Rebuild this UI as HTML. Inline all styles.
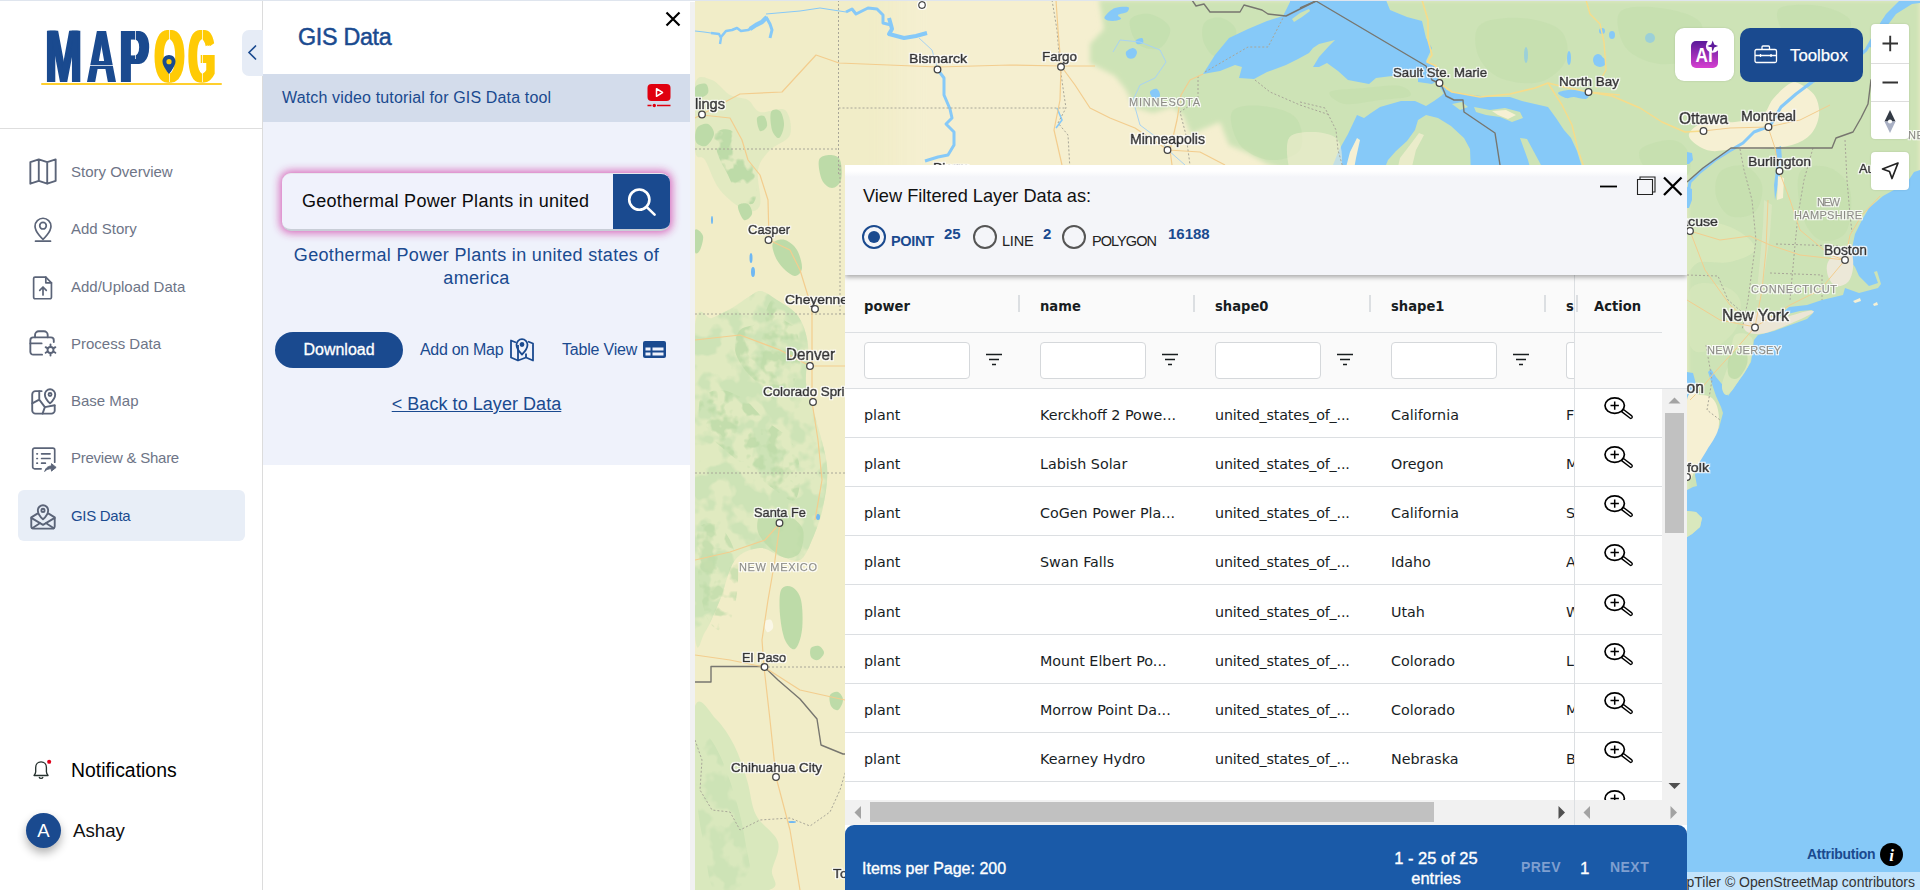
<!DOCTYPE html>
<html lang="en">
<head>
<meta charset="utf-8">
<title>MAPOG - GIS Data</title>
<style>
*{box-sizing:border-box;margin:0;padding:0}
html,body{width:1920px;height:890px;overflow:hidden;background:#fff;font-family:"Liberation Sans",sans-serif;color:#000}
.abs{position:absolute}
#topbar{position:absolute;left:0;top:0;width:1920px;height:1px;background:#dfe5ee;z-index:50}
/* ---------- sidebar ---------- */
#sidebar{position:absolute;left:0;top:0;width:263px;height:890px;background:#fff;border-right:1px solid #dcdcdc}
#logo{position:absolute;left:0;top:0;width:240px;height:100px}
#logo span{position:absolute;top:19.500px;font-size:74.500px;line-height:1;font-weight:bold;transform-origin:0 0;display:block}
#logo i{position:absolute;background:#fff;opacity:.75;display:block}
#logoline{position:absolute;left:40.500px;top:82.800px;width:181px;height:2.200px;background:#ffcf2e;border-radius:1px}
#sep{position:absolute;left:0;top:128px;width:262px;height:1px;background:#dedede}
#collapse{position:absolute;left:242px;top:30px;width:21px;height:46px;background:#e6ecf6;border-radius:7px 0 0 7px}
.mi{position:absolute;left:18px;width:227px;height:51px;border-radius:6px}
.mi.active{background:#e8eef7}
.mi svg{position:absolute;left:10px;top:11px;width:30px;height:30px}
.mi span{position:absolute;left:53px;top:17px;font-size:15px;line-height:18px;color:#6e7587;white-space:nowrap;letter-spacing:0px}
.mi.active span{color:#1a4a8f}
#notif{position:absolute;left:71px;top:759px;font-size:19.400px;line-height:22px;color:#000}
#avatar{position:absolute;left:26px;top:813px;width:35px;height:35px;border-radius:50%;background:#1a4a8f;color:#fff;font-size:18.500px;line-height:35px;text-align:center;box-shadow:0 5px 10px rgba(0,0,0,.3)}
#uname{position:absolute;left:73px;top:820px;font-size:18.700px;line-height:22px;color:#111}
/* ---------- panel ---------- */
#panel{position:absolute;left:263px;top:0;width:427px;height:890px;background:#fff}
#pscroll{position:absolute;left:690px;top:2px;width:5px;height:888px;background:#f1f1f1}
#ptitle{position:absolute;left:35px;top:24px;font-size:23.300px;line-height:26px;color:#1a4a8f;font-weight:normal;-webkit-text-stroke:.5px #1a4a8f;letter-spacing:-.3px}
#tut{position:absolute;left:0;top:74px;width:427px;height:48px;background:#d3dceb}
#tut span{position:absolute;left:19px;top:14px;font-size:16px;line-height:19px;color:#1a4a8f;letter-spacing:.15px;white-space:nowrap}
#pbody{position:absolute;left:0;top:122px;width:427px;height:343px;background:#eff2fb}
#search{position:absolute;left:19px;top:51px;width:388px;height:58px;border-radius:9px;background:#f0f2fc;box-shadow:0 0 9px 1.500px rgba(214,95,182,.95);overflow:hidden;border-bottom:2px solid #c9ced7;border-top:1px solid #e6e8ee}
#search .txt{position:absolute;left:20px;top:16.500px;font-size:18px;line-height:21px;color:#0b0b0b;white-space:nowrap;letter-spacing:.28px}
#search .btn{position:absolute;right:0;top:0;width:57px;height:55px;background:#1a4a8f}
#sub{position:absolute;left:0;top:122px;width:427px;text-align:center;font-size:18px;line-height:23px;color:#1a4a8f;letter-spacing:.33px}
#dl{position:absolute;left:12px;top:210px;width:128px;height:36px;border-radius:18px;background:#1a4a8f;color:#fff;font-size:16px;line-height:36px;text-align:center;-webkit-text-stroke:.3px #fff}
.plink{position:absolute;top:218px;font-size:16px;line-height:19px;color:#1a4a8f;white-space:nowrap}
#back{position:absolute;left:0;top:271px;width:427px;text-align:center;font-size:18px;line-height:22px;color:#1a4a8f;text-decoration:underline;letter-spacing:.05px}
/* ---------- map ---------- */
#map{position:absolute;left:695px;top:0;width:1225px;height:890px;background:#f1edc8;overflow:hidden}
#map svg.base{position:absolute;left:0;top:0}
.ctl{position:absolute;background:#fff;border-radius:4px;box-shadow:0 0 2px rgba(0,0,0,.15)}
/* ---------- dialog ---------- */
#dlg{position:absolute;left:845px;top:165px;width:842px;height:725px;background:#fff;overflow:hidden}
#dhead{position:absolute;left:0;top:0;width:842px;height:110px;background:#f4f5f9;box-shadow:0 2px 5px rgba(0,0,0,.35);z-index:3;border-top:10px solid #fff}
#dhead::before{content:"";position:absolute;left:0;top:-4px;width:100%;height:6px;background:linear-gradient(to bottom,#fff 0,#f4f5f9 100%)}
#dtitle{position:absolute;left:18px;top:10px;font-size:18.200px;line-height:22px;color:#111}
.rad{position:absolute;top:50px;width:24px;height:24px;border-radius:50%;border:2px solid #555}
.rad.on{border-color:#1a4a8f}
.rad.on::after{content:"";position:absolute;left:4px;top:4px;width:12px;height:12px;border-radius:50%;background:#1a4a8f}
.rlab{position:absolute;top:57px;font-size:14.500px;line-height:18px;color:#222;white-space:nowrap}
.rcnt{position:absolute;top:50px;font-size:15px;line-height:18px;color:#1a4a8f;font-weight:bold;white-space:nowrap}
#grid{position:absolute;left:0;top:110px;width:842px;height:550px;background:#fff;font-family:"DejaVu Sans","Liberation Sans",sans-serif}
#ghead{position:absolute;left:0;top:0;width:817px;height:114px;background:#fafafa}
.hl{position:absolute;left:0;height:1px;background:#dcdfe2}
.hc{position:absolute;top:22px;font-family:"DejaVu Sans Condensed","DejaVu Sans",sans-serif;font-size:14.600px;line-height:18px;font-weight:bold;color:#181d1f;white-space:nowrap}
.hsep{position:absolute;top:20px;width:2px;height:17px;background:#dcdfe2}
.fin{position:absolute;top:67px;width:106px;height:37px;border:1px solid #d5d8db;border-radius:4px;background:#fff}
.fic{position:absolute;top:78px;width:18px;height:14px}
.row{position:absolute;left:0;width:817px;height:49px;border-bottom:1px solid #dcdfe2}
.row span{position:absolute;top:17px;font-size:14.300px;line-height:18px;color:#181d1f;white-space:nowrap}
.row svg{position:absolute;left:757px;top:5px;width:32px;height:30px}
#pin{position:absolute;left:729px;top:0;width:1px;height:550px;background:#dcdfe2}
#foot{position:absolute;left:0;top:660px;width:842px;height:65px;background:#1a5aa8;border-radius:9px 9px 0 0;color:#fff}
</style>
</head>
<body>
<div id="topbar"></div>

<div id="sidebar">
  <div id="logo">
<span style="left:44.37px;transform:scaleX(0.588);color:#1a4a8f;text-shadow:4.56px 0 0 #1a4a8f,2.28px 0 0 #1a4a8f">M</span>
<span style="left:86.21px;transform:scaleX(0.53);color:#1a4a8f;text-shadow:4.72px 0 0 #1a4a8f,2.36px 0 0 #1a4a8f">A</span>
<span style="left:118.40px;transform:scaleX(0.582);color:#1a4a8f;text-shadow:6.62px 0 0 #1a4a8f,3.31px 0 0 #1a4a8f">P</span>
<span style="left:153.30px;transform:scaleX(0.505);color:#ffcb05;text-shadow:7.62px 0 0 #ffcb05,3.81px 0 0 #ffcb05">O</span>
<span style="left:187.28px;transform:scaleX(0.443);color:#ffcb05;text-shadow:9.26px 0 0 #ffcb05,4.63px 0 0 #ffcb05">G</span>
<i style="left:90px;top:65px;width:24px;height:1.200px"></i><i style="left:135px;top:30px;width:1px;height:29px"></i><i style="left:168.500px;top:30px;width:1px;height:52px"></i><i style="left:201.500px;top:30px;width:1px;height:52px"></i>
<svg style="position:absolute;left:161px;top:54px" width="16" height="21" viewBox="0 0 16 21"><path d="M8 1c-3.700 0-6.500 2.800-6.500 6.400c0 4.800 6.500 12.600 6.500 12.600s6.500-7.800 6.500-12.600c0-3.600-2.800-6.400-6.500-6.400z" fill="#1a4a8f"/><circle cx="8" cy="7.700" r="2.600" fill="#ffcb05"/></svg>
</div>
  <div id="logoline"></div>
  <div id="collapse"><svg width="21" height="46" viewBox="0 0 21 46"><path d="M14 15.500L7 22.500l7 7" fill="none" stroke="#1a4a8f" stroke-width="1.600"/></svg></div>
  <div id="sep"></div>

  <div class="mi" style="top:146px"><svg viewBox="0 0 32 32" fill="none" stroke="#5b6478" stroke-width="2" stroke-linejoin="round" stroke-linecap="round"><path d="M2.500 5.500l9-3 9 3 9-3v23l-9 3-9-3-9 3zM11.500 2.500v23M20.500 5.500v23"/></svg><span>Story Overview</span></div>
  <div class="mi" style="top:203px"><svg viewBox="0 0 32 32" fill="none" stroke="#5b6478" stroke-width="1.800" stroke-linecap="round"><path d="M16 27s-8.500-7.500-8.500-14a8.500 8.500 0 0 1 17 0c0 6.500-8.500 14-8.500 14z"/><circle cx="16" cy="12.500" r="3.500"/><path d="M8 29h16"/></svg><span>Add Story</span></div>
  <div class="mi" style="top:261px"><svg viewBox="0 0 32 32" fill="none" stroke="#5b6478" stroke-width="1.800" stroke-linejoin="round" stroke-linecap="round"><path d="M7.500 5.500h11.500l6 6v15.500a1.500 1.500 0 0 1-1.500 1.500h-16a1.500 1.500 0 0 1-1.500-1.500v-20a1.500 1.500 0 0 1 1.500-1.500z"/><path d="M19 5.500v6h6"/><path d="M16 24.500v-8M12.500 19.500l3.500-3.500 3.500 3.500"/></svg><span>Add/Upload Data</span></div>
  <div class="mi" style="top:318px"><svg style="top:9px" viewBox="0 0 32 32" fill="none" stroke="#5b6478" stroke-width="2" stroke-linejoin="round" stroke-linecap="round"><path d="M15 29.500h-9.500a3 3 0 0 1-3-3v-12.500a3 3 0 0 1 3-3h19a3 3 0 0 1 3 3v2"/><path d="M7.500 11v-2.500a4 4 0 0 1 4-4h5.500a4 4 0 0 1 4 4v2.500"/><path d="M2.500 17.500h12"/><circle cx="24" cy="24.500" r="3.200"/><path d="M24 18.500v2.500M24 28v2.500M18.800 21.500l2.200 1.300M27 26.200l2.200 1.300M18.800 27.500l2.200-1.300M27 22.800l2.200-1.300"/></svg><span>Process Data</span></div>
  <div class="mi" style="top:375px"><svg viewBox="0 0 32 32" fill="none" stroke="#5b6478" stroke-width="2" stroke-linejoin="round" stroke-linecap="round"><path d="M14.500 5.500h-6.500a3.500 3.500 0 0 0-3.500 3.500v17a3.500 3.500 0 0 0 3.500 3.500h17a3.500 3.500 0 0 0 3.500-3.500v-5"/><path d="M12 5.500v9l-7.500 4M12 14.500l6 8-2.500 7M18 22.500l10.500-2"/><path d="M23.500 18.500s-5.500-5-5.500-9.500a5.500 5.500 0 0 1 11 0c0 4.500-5.500 9.500-5.500 9.500z"/><circle cx="23.500" cy="9" r="1.600"/></svg><span>Base Map</span></div>
  <div class="mi" style="top:432px"><svg viewBox="0 0 32 32" fill="none" stroke="#5b6478" stroke-width="1.800" stroke-linejoin="round" stroke-linecap="round"><path d="M14 27.500h-7a2 2 0 0 1-2-2v-18a2 2 0 0 1 2-2h19.500a2 2 0 0 1 2 2v13"/><path d="M14.500 11.500h9M14.500 16.500h9M14.500 21.500h4M9.500 11.500h.5M9.500 16.500h.5M9.500 21.500h.5"/><path d="M18 30c1-4 4-5.500 7-5.500v-2.500l5 4-5 4v-2.500c-3 0-5 .5-7 2.500z" fill="#5b6478" stroke-width="1"/></svg><span style="letter-spacing:-.25px">Preview &amp; Share</span></div>
  <div class="mi active" style="top:490px"><svg viewBox="0 0 32 32" fill="none" stroke="#5b6478" stroke-width="2" stroke-linejoin="round" stroke-linecap="round"><path d="M10 13.500l-6.500 4v9.500a2.500 2.500 0 0 0 2.500 2.500h20a2.500 2.500 0 0 0 2.500-2.500v-9.500l-6.500-4"/><path d="M3.500 18l12.500 7.500 12.500-7.500M4.500 29l8.500-5.500M27.500 29l-8.500-5.500"/><path d="M16 19.500s-5.500-5-5.500-9.500a5.500 5.500 0 0 1 11 0c0 4.500-5.500 9.500-5.500 9.500z"/><circle cx="16" cy="10" r="1.700"/></svg><span style="letter-spacing:-.3px">GIS Data</span></div>

  <svg class="abs" style="left:29px;top:756px" width="25" height="28.600" viewBox="0 0 28 32"><path d="M13.500 6.500c-3.600 0-6 2.700-6 6.300v4.700c0 1.500-.7 2.800-1.800 4.300h15.600c-1.100-1.500-1.800-2.800-1.800-4.300v-4.700c0-3.600-2.400-6.300-6-6.300z" fill="none" stroke="#26322f" stroke-width="1.500" stroke-linejoin="round"/><path d="M11.300 23.500a2.300 2.300 0 0 0 4.400 0" fill="none" stroke="#26322f" stroke-width="1.400"/><circle cx="22.600" cy="6.500" r="2.300" fill="#e0001b"/></svg>
  <div id="notif">Notifications</div>
  <div id="avatar">A</div>
  <div id="uname">Ashay</div>
</div>

<div id="panel">
  <div id="ptitle">GIS Data</div>
  <svg class="abs" style="left:401px;top:10px" width="18" height="18" viewBox="0 0 18 18"><path d="M2.500 2.500l13 13M15.500 2.500l-13 13" stroke="#000" stroke-width="2.200" fill="none"/></svg>
  <div id="tut"><span>Watch video tutorial for GIS Data tool</span>
    <svg class="abs" style="left:383px;top:9px" width="26" height="28" viewBox="0 0 26 28"><rect x="1.500" y="1" width="23" height="17" rx="4" fill="#e0000f"/><path d="M10.500 5.700l6 3.800-6 3.800z" fill="none" stroke="#fff" stroke-width="1.500" stroke-linejoin="round"/><path d="M1.500 22.500h4M11 22.500h13.500" stroke="#e0000f" stroke-width="1.600"/><circle cx="8.300" cy="22.500" r="1.700" fill="#e0000f"/></svg>
  </div>
  <div id="pbody">
    <div id="search"><span class="txt">Geothermal Power Plants in united</span>
      <div class="btn"><svg width="57" height="55" viewBox="0 0 57 55"><circle cx="26.300" cy="25.600" r="10.100" fill="none" stroke="#fff" stroke-width="2.600"/><path d="M33.800 33.100l7.800 7.500" stroke="#fff" stroke-width="2.600" stroke-linecap="round"/></svg></div>
    </div>
    <div id="sub">Geothermal Power Plants in united states of<br>america</div>
    <div id="dl">Download</div>
    <div class="plink" style="left:157px;letter-spacing:-.3px">Add on Map</div>
    <svg class="abs" style="left:245px;top:213px" width="28" height="28" viewBox="0 0 28 28" fill="none" stroke="#1a4a8f" stroke-width="1.800" stroke-linejoin="round"><path d="M8 7.500l-5 -2v17l7 3 8-3 7 3v-17l-5-2"/><path d="M10 10v15.500M18 22.500v-4"/><path d="M14 19.500s-5.500-5.500-5.500-9.800a5.500 5.500 0 0 1 11 0c0 4.300-5.500 9.800-5.500 9.800z"/><circle cx="14" cy="9.500" r="1.500" fill="#1a4a8f"/></svg>
    <div class="plink" style="left:299px;letter-spacing:-.2px">Table View</div>
    <svg class="abs" style="left:380px;top:219px" width="23" height="18" viewBox="0 0 23 18"><rect x="0" y="0" width="23" height="17" rx="2" fill="#1a4a8f"/><path d="M2.500 6.500h5v3h-5zM9.500 6.500h11v3h-11zM2.500 11.500h5v3h-5zM9.500 11.500h11v3h-11z" fill="#eff2fb"/></svg>
    <div id="back">&lt; Back to Layer Data</div>
  </div>
</div>
<div id="pscroll"></div>

<div id="map">
<svg class="base" width="1225" height="890" viewBox="695 0 1225 890">
<rect x="695" y="0" width="1225" height="890" fill="#f1edc8"/>
<filter id="mot" x="0" y="0" width="100%" height="100%"><feTurbulence type="fractalNoise" baseFrequency="0.045" numOctaves="3" seed="7" result="n"/><feColorMatrix in="n" type="matrix" values="0 0 0 0 0 0 0 0 0 0 0 0 0 0 0 0 0 0 7 -3.100" result="m"/><feComposite in="SourceGraphic" in2="m" operator="in"/></filter>
<filter id="mot2" x="0" y="0" width="100%" height="100%"><feTurbulence type="fractalNoise" baseFrequency="0.06" numOctaves="3" seed="23" result="n"/><feColorMatrix in="n" type="matrix" values="0 0 0 0 0 0 0 0 0 0 0 0 0 0 0 0 0 0 7 -3.400" result="m"/><feComposite in="SourceGraphic" in2="m" operator="in"/></filter>
<filter id="soft2" x="-10%" y="-30%" width="120%" height="160%"><feGaussianBlur stdDeviation="14"/></filter>
<path d="M900 -30 L1320 -30 L1320 200 L900 200Z" fill="#f6f0d3" opacity=".8" filter="url(#soft2)"/>
<filter id="soft" x="-5%" y="-5%" width="110%" height="110%"><feGaussianBlur stdDeviation="2.500"/></filter>
<path d="M1099 0 L1104 29 L1090 44 L1090 63 L1115 76 L1126 90 L1134 107 L1153 113 L1172 107 L1183 115 L1191 134 L1220 122 L1229 145 L1248 153 L1267 164 L1300 175 L1687 175 L1687 560 L1920 560 L1920 0Z" fill="#cde3b6" filter="url(#soft)"/>
<path d="M1205 22C1208.2 18.3 1216.8 16.7 1222 18C1227.2 19.3 1234.7 24.7 1236 30C1237.3 35.3 1233.7 45.7 1230 50C1226.3 54.3 1218.5 57.7 1214 56C1209.5 54.3 1204.5 45.7 1203 40C1201.5 34.3 1201.8 25.7 1205 22Z" fill="#bddba8" opacity=".45"/>
<path d="M1232 112C1235.7 105.5 1251.3 105.0 1262 106C1272.7 107.0 1289.7 110.7 1296 118C1302.3 125.3 1304.3 143.0 1300 150C1295.7 157.0 1280.0 160.8 1270 160C1260.0 159.2 1246.3 153.0 1240 145C1233.7 137.0 1228.3 118.5 1232 112Z" fill="#bddba8" opacity=".45"/>
<path d="M1130 20C1132.0 15.0 1143.3 12.7 1150 14C1156.7 15.3 1168.3 22.3 1170 28C1171.7 33.7 1165.3 45.3 1160 48C1154.7 50.7 1143.0 48.7 1138 44C1133.0 39.3 1128.0 25.0 1130 20Z" fill="#bddba8" opacity=".45"/>
<path d="M1203 74 L1215 55 L1229 38 L1248 29 L1267 21 L1283 16 L1290 2 L1290 0 L1386 0 L1390 10 L1407 17 L1422 21 L1426 38 L1432 48 L1426 61 L1434 65 L1439 80 L1432 84 L1418 82 L1418 76 L1407 74 L1392 76 L1376 78 L1369 84 L1348 80 L1338 71 L1327 63 L1319 67 L1313 67 L1319 57 L1329 46 L1335 40 L1319 44 L1313 48 L1309 53 L1298 59 L1286 65 L1267 72 L1254 79 L1239 78 L1242 67 L1235 65 L1220 71Z" fill="#86c9f8" />
<path d="M1292 19 L1300 13 L1309 9 L1310 11 L1302 17 L1294 22Z" fill="#cde3b6" />
<path d="M1329 175 L1339 150 L1348 134 L1357 115 L1364 118 L1371 113 L1380 107 L1401 101 L1415 101 L1426 106 L1434 101 L1441 96 L1447 90 L1451 92 L1472 95 L1491 97 L1510 97 L1522 101 L1548 107 L1556 118 L1564 130 L1571 138 L1577 151 L1581 164 L1584 175Z" fill="#86c9f8" />
<path d="M1439 82 L1444 90 L1449 97 L1458 101" fill="none" stroke="#86c9f8" stroke-width="4" stroke-linejoin="round" />
<path d="M1382 175 L1388 160 L1396 151 L1407 141 L1415 130 L1418 120 L1426 115 L1438 118 L1451 126 L1464 138 L1470 149 L1471 175Z" fill="#cde3b6" />
<path d="M1396 175 L1400 158 L1410 145 L1419 133 L1424 135 L1416 150 L1410 175Z" fill="#f6f0d3" opacity=".7"/>
<path d="M1452 104 L1462 102 L1468 107 L1460 110Z" fill="#cde3b6" />
<path d="M1474 107 L1490 110 L1505 108 L1520 112 L1523 118 L1512 122 L1500 117 L1486 115 L1476 112Z" fill="#cde3b6" />
<path d="M1492 111 L1506 110 L1516 115 L1508 119 L1498 115Z" fill="#f6f0d3" />
<path d="M1520 138 L1527 139 L1534 152 L1541 165 L1545 175 L1532 175 L1528 160Z" fill="#cde3b6" />
<path d="M1344 175 L1350 152 L1357 138 L1360 140 L1356 158 L1353 175Z" fill="#f6f0d3" />
<path d="M1106 15C1107.7 13.2 1111.3 9.3 1115 8C1118.7 6.7 1126.0 6.3 1128 7C1130.0 7.7 1128.7 10.7 1127 12C1125.3 13.3 1119.0 13.8 1118 15C1117.0 16.2 1122.0 18.0 1121 19C1120.0 20.0 1114.7 21.0 1112 21C1109.3 21.0 1106.0 20.0 1105 19C1104.0 18.0 1104.3 16.8 1106 15Z" fill="#86c9f8" />
<path d="M1126 52C1126.8 50.3 1131.2 48.0 1133 48C1134.8 48.0 1136.8 50.3 1137 52C1137.2 53.7 1135.5 57.0 1134 58C1132.5 59.0 1129.3 59.0 1128 58C1126.7 57.0 1125.2 53.7 1126 52Z" fill="#86c9f8" />
<path d="M1136 40C1136.8 39.0 1140.8 37.5 1142 38C1143.2 38.5 1143.8 42.0 1143 43C1142.2 44.0 1138.2 44.5 1137 44C1135.8 43.5 1135.2 41.0 1136 40Z" fill="#86c9f8" />
<path d="M1150 92C1150.5 90.3 1155.3 88.3 1157 89C1158.7 89.7 1160.5 94.3 1160 96C1159.5 97.7 1155.7 99.7 1154 99C1152.3 98.3 1149.5 93.7 1150 92Z" fill="#86c9f8" />
<path d="M1558 93C1558.3 91.7 1564.3 90.5 1568 90C1571.7 89.5 1576.5 89.5 1580 90C1583.5 90.5 1588.0 91.5 1589 93C1590.0 94.5 1588.5 98.3 1586 99C1583.5 99.7 1577.3 97.2 1574 97C1570.7 96.8 1568.7 98.7 1566 98C1563.3 97.3 1557.7 94.3 1558 93Z" fill="#86c9f8" />
<ellipse cx="1526" cy="55" rx="2" ry="8" fill="#86c9f8"/>
<ellipse cx="1569" cy="58" rx="2" ry="7" fill="#86c9f8"/>
<ellipse cx="1598" cy="60" rx="5" ry="6" fill="#86c9f8"/>
<ellipse cx="1602" cy="31" rx="3" ry="3" fill="#86c9f8"/>
<ellipse cx="1600" cy="62" rx="6" ry="5" fill="#86c9f8"/>
<ellipse cx="1650" cy="38" rx="5" ry="5" fill="#86c9f8"/>
<ellipse cx="1612" cy="35" rx="3" ry="4" fill="#86c9f8"/>
<path d="M1480 25C1487.0 18.8 1506.7 17.2 1520 18C1533.3 18.8 1552.3 23.0 1560 30C1567.7 37.0 1569.3 51.3 1566 60C1562.7 68.7 1551.0 79.0 1540 82C1529.0 85.0 1510.3 82.5 1500 78C1489.7 73.5 1481.3 63.8 1478 55C1474.7 46.2 1473.0 31.2 1480 25Z" fill="#bddba8" opacity=".4"/>
<path d="M1620 12C1625.7 5.3 1646.7 6.3 1660 8C1673.3 9.7 1694.0 14.2 1700 22C1706.0 29.8 1702.7 48.0 1696 55C1689.3 62.0 1671.7 65.2 1660 64C1648.3 62.8 1632.7 56.7 1626 48C1619.3 39.3 1614.3 18.7 1620 12Z" fill="#bddba8" opacity=".4"/>
<path d="M1780 8C1786.3 4.0 1808.3 4.0 1820 6C1831.7 8.0 1846.7 14.3 1850 20C1853.3 25.7 1848.3 36.0 1840 40C1831.7 44.0 1809.7 45.7 1800 44C1790.3 42.3 1785.3 36.0 1782 30C1778.7 24.0 1773.7 12.0 1780 8Z" fill="#bddba8" opacity=".4"/>
<path d="M1720 172C1724.8 167.0 1738.0 163.8 1745 166C1752.0 168.2 1760.3 177.3 1762 185C1763.7 192.7 1760.3 206.8 1755 212C1749.7 217.2 1736.5 218.7 1730 216C1723.5 213.3 1717.7 203.3 1716 196C1714.3 188.7 1715.2 177.0 1720 172Z" fill="#bddba8" opacity=".4"/>
<path d="M1800 172C1804.7 164.2 1821.7 165.0 1830 168C1838.3 171.0 1847.3 179.3 1850 190C1852.7 200.7 1851.0 223.7 1846 232C1841.0 240.3 1827.3 242.8 1820 240C1812.7 237.2 1805.3 226.3 1802 215C1798.7 203.7 1795.3 179.8 1800 172Z" fill="#bddba8" opacity=".4"/>
<path d="M1330 92C1333.3 89.3 1353.3 89.0 1365 88C1376.7 87.0 1392.5 84.7 1400 86C1407.5 87.3 1413.3 93.7 1410 96C1406.7 98.3 1390.8 98.7 1380 100C1369.2 101.3 1353.3 105.3 1345 104C1336.7 102.7 1326.7 94.7 1330 92Z" fill="#bddba8" opacity=".4"/>
<path d="M1640 150C1643.3 144.7 1662.2 140.0 1670 140C1677.8 140.0 1684.2 144.2 1687 150C1689.8 155.8 1693.2 171.3 1687 175C1680.8 178.7 1657.8 176.2 1650 172C1642.2 167.8 1636.7 155.3 1640 150Z" fill="#bddba8" opacity=".4"/>
<path d="M1288 140C1290.5 132.3 1302.0 132.3 1310 132C1318.0 131.7 1330.7 133.3 1336 138C1341.3 142.7 1342.2 153.3 1342 160C1341.8 166.7 1342.8 175.0 1335 178C1327.2 181.0 1302.8 184.3 1295 178C1287.2 171.7 1285.5 147.7 1288 140Z" fill="#f6f0d3" opacity=".55"/>
<path d="M1916 0 L1896 8 L1884 20 L1874 36 L1866 50 L1850 64 L1812 82 L1796 94 L1781 107 L1770 126 L1754 132 L1743 143 L1731 150 L1715 160 L1700 172 L1690 182 L1687 200" fill="none" stroke="#86c9f8" stroke-width="3" stroke-linejoin="round" />
<path d="M1920 0 L1900 0 L1886 14 L1876 30 L1868 46 L1872 48 L1884 30 L1896 14 L1912 4 L1920 3Z" fill="#86c9f8" />
<path d="M1689 134C1690.3 130.2 1697.3 124.0 1705 122C1712.7 120.0 1725.5 123.2 1735 122C1744.5 120.8 1755.7 118.8 1762 115C1768.3 111.2 1768.5 104.2 1773 99C1777.5 93.8 1784.5 86.5 1789 84C1793.5 81.5 1795.7 82.0 1800 84C1804.3 86.0 1811.8 90.8 1815 96C1818.2 101.2 1819.7 108.7 1819 115C1818.3 121.3 1815.5 129.0 1811 134C1806.5 139.0 1800.2 142.5 1792 145C1783.8 147.5 1771.5 148.3 1762 149C1752.5 149.7 1743.3 148.7 1735 149C1726.7 149.3 1718.3 151.7 1712 151C1705.7 150.3 1700.8 147.8 1697 145C1693.2 142.2 1687.7 137.8 1689 134Z" fill="#f6f0d3" />
<path d="M1812 82 L1796 94 L1781 107 L1770 126 L1754 132 L1743 143 L1731 150" fill="none" stroke="#86c9f8" stroke-width="3" stroke-linejoin="round" />
<path d="M1776 148 L1781 146 L1782 160 L1780 175 L1777 190 L1775 200 L1774 185 L1776 170Z" fill="#86c9f8" />
<path d="M1778 176 L1784 178 L1783 198 L1777 200Z" fill="#f6f0d3" />
<path d="M1687 152 L1692 153 L1693 160 L1689 164 L1687 164Z" fill="#86c9f8" />
<path d="M1687 187 L1692 189 L1692 200 L1689 208 L1687 208Z" fill="#86c9f8" />
<path d="M1920 170 L1914 172 L1906 184 L1892 191 L1883 196 L1869 208 L1862 220 L1855 234 L1852 248 L1848 258 L1855 267 L1859 276 L1869 286 L1878 283 L1874 272 L1877 271 L1881 284 L1878 288 L1859 293 L1845 288 L1843 295 L1822 300 L1807 305 L1789 307 L1779 316 L1800 311 L1812 310 L1813 313 L1807 319 L1774 331 L1758 335 L1754 340 L1751 362 L1742 376 L1728 396 L1726 389 L1716 377 L1711 369 L1708 372 L1712 384 L1716 396 L1721 407 L1723 413 L1719 428 L1711 438 L1703 451 L1698 462 L1695 475 L1697 486 L1693 487 L1687 490 L1687 511 L1696 512 L1702 518 L1700 527 L1692 534 L1687 537 L1687 890 L1920 890Z" fill="#86c9f8" />
<path d="M1687 372 L1693 373 L1696 384 L1693 397 L1695 407 L1690 412 L1687 412Z" fill="#86c9f8" />
<path d="M1687 445 L1690 452 L1689 470 L1687 476Z" fill="#86c9f8" />
<path d="M1853 301 L1860 298 L1861 301 L1855 303Z" fill="#f6f0d3" />
<path d="M1873 304 L1877 302 L1878 305 L1874 306Z" fill="#f6f0d3" />
<path d="M1700 395C1704.2 394.7 1709.0 395.5 1712 398C1715.0 400.5 1717.0 404.7 1718 410C1719.0 415.3 1719.8 423.3 1718 430C1716.2 436.7 1710.7 443.7 1707 450C1703.3 456.3 1698.8 463.0 1696 468C1693.2 473.0 1691.5 479.7 1690 480C1688.5 480.3 1687.5 483.3 1687 470C1686.5 456.7 1684.8 412.5 1687 400C1689.2 387.5 1695.8 395.3 1700 395Z" fill="#f6f0d3" />
<path d="M1687 511 L1696 512 L1702 518 L1700 527 L1692 534 L1687 537Z" fill="#d9e8bd" />
<path d="M1735 335C1738.7 331.3 1749.5 333.5 1752 338C1754.5 342.5 1752.3 354.7 1750 362C1747.7 369.3 1741.8 376.5 1738 382C1734.2 387.5 1729.7 394.5 1727 395C1724.3 395.5 1721.5 390.8 1722 385C1722.5 379.2 1727.8 368.3 1730 360C1732.2 351.7 1731.3 338.7 1735 335Z" fill="#d9e8bd" />
<path d="M1732 352C1734.8 350.0 1742.5 348.0 1745 350C1747.5 352.0 1748.2 359.3 1747 364C1745.8 368.7 1741.0 376.0 1738 378C1735.0 380.0 1730.7 378.7 1729 376C1727.3 373.3 1727.5 366.0 1728 362C1728.5 358.0 1729.2 354.0 1732 352Z" fill="#bddba8" opacity=".8"/>
<path d="M1745 318C1747.5 315.0 1754.5 312.0 1760 312C1765.5 312.0 1770.0 318.2 1778 318C1786.0 317.8 1802.5 311.7 1808 311C1813.5 310.3 1816.5 310.8 1811 314C1805.5 317.2 1784.0 326.7 1775 330C1766.0 333.3 1762.0 334.0 1757 334C1752.0 334.0 1747.0 332.7 1745 330C1743.0 327.3 1742.5 321.0 1745 318Z" fill="#ece6d6" />
<path d="M1828 262C1830.0 257.7 1836.2 251.7 1840 250C1843.8 248.3 1848.8 249.0 1851 252C1853.2 255.0 1853.5 263.0 1853 268C1852.5 273.0 1850.8 279.0 1848 282C1845.2 285.0 1839.3 287.0 1836 286C1832.7 285.0 1829.3 280.0 1828 276C1826.7 272.0 1826.0 266.3 1828 262Z" fill="#ece8d8" />
<path d="M1764 200 L1772 205 L1770 235 L1765 270 L1760 300 L1756 300 L1760 260 L1763 225Z" fill="#f6f0d3" opacity=".3"/>
<path d="M1687 230C1690.8 222.0 1701.2 221.7 1710 222C1718.8 222.3 1732.5 227.3 1740 232C1747.5 236.7 1756.7 245.0 1755 250C1753.3 255.0 1739.2 260.0 1730 262C1720.8 264.0 1707.2 260.7 1700 262C1692.8 263.3 1689.2 275.3 1687 270C1684.8 264.7 1683.2 238.0 1687 230Z" fill="#d9e8bd" opacity=".8"/>
<path d="M1690 290C1695.0 280.0 1711.7 283.3 1720 285C1728.3 286.7 1737.5 292.5 1740 300C1742.5 307.5 1740.0 321.7 1735 330C1730.0 338.3 1717.5 347.5 1710 350C1702.5 352.5 1693.3 355.0 1690 345C1686.7 335.0 1685.0 300.0 1690 290Z" fill="#d9e8bd" opacity=".6"/>
<path d="M695 84C697.8 72.3 706.2 78.2 712 80C717.8 81.8 724.0 91.7 730 95C736.0 98.3 743.0 97.2 748 100C753.0 102.8 753.8 110.3 760 112C766.2 113.7 780.0 106.2 785 110C790.0 113.8 792.5 128.3 790 135C787.5 141.7 775.3 144.2 770 150C764.7 155.8 759.7 160.8 758 170C756.3 179.2 762.2 198.3 760 205C757.8 211.7 751.7 212.5 745 210C738.3 207.5 726.7 198.3 720 190C713.3 181.7 709.2 166.7 705 160C700.8 153.3 696.7 162.7 695 150C693.3 137.3 692.2 95.7 695 84Z" fill="#d9e8bd" opacity=".6"/>
<path d="M715 134C717.0 129.8 725.0 128.2 730 130C735.0 131.8 741.2 139.2 745 145C748.8 150.8 751.0 157.5 753 165C755.0 172.5 757.2 183.5 757 190C756.8 196.5 755.2 203.0 752 204C748.8 205.0 742.0 200.8 738 196C734.0 191.2 731.3 181.8 728 175C724.7 168.2 720.2 161.8 718 155C715.8 148.2 713.0 138.2 715 134Z" fill="#bddba8" filter="url(#mot2)"/>
<path d="M696 86C697.8 84.0 704.0 82.8 706 84C708.0 85.2 709.0 90.7 708 93C707.0 95.3 702.2 97.5 700 98C697.8 98.5 695.7 98.0 695 96C694.3 94.0 694.2 88.0 696 86Z" fill="#bddba8" />
<path d="M697 128C699.0 125.0 705.2 123.0 708 124C710.8 125.0 714.3 130.3 714 134C713.7 137.7 709.0 144.7 706 146C703.0 147.3 697.5 145.0 696 142C694.5 139.0 695.0 131.0 697 128Z" fill="#bddba8" />
<path d="M757 118C757.7 115.5 762.3 114.7 764 116C765.7 117.3 767.7 123.5 767 126C766.3 128.5 761.7 132.3 760 131C758.3 129.7 756.3 120.5 757 118Z" fill="#bddba8" />
<path d="M771 112C772.3 108.8 777.8 108.8 780 111C782.2 113.2 784.2 120.5 784 125C783.8 129.5 781.0 137.2 779 138C777.0 138.8 773.3 134.3 772 130C770.7 125.7 769.7 115.2 771 112Z" fill="#bddba8" />
<path d="M819 160C820.3 155.8 826.5 155.0 830 155C833.5 155.0 838.2 155.8 840 160C841.8 164.2 842.3 175.3 841 180C839.7 184.7 835.2 188.0 832 188C828.8 188.0 824.2 184.7 822 180C819.8 175.3 817.7 164.2 819 160Z" fill="#bddba8" />
<path d="M773 243C774.7 240.3 781.0 238.8 785 240C789.0 241.2 794.2 245.3 797 250C799.8 254.7 802.3 263.7 802 268C801.7 272.3 798.2 276.0 795 276C791.8 276.0 786.3 271.3 783 268C779.7 264.7 776.7 260.2 775 256C773.3 251.8 771.3 245.7 773 243Z" fill="#bddba8" />
<path d="M738 206C738.7 203.3 745.7 202.7 748 204C750.3 205.3 752.7 211.3 752 214C751.3 216.7 746.3 221.3 744 220C741.7 218.7 737.3 208.7 738 206Z" fill="#bddba8" />
<path d="M695 230C696.3 227.3 702.2 232.7 703 236C703.8 239.3 701.3 247.3 700 250C698.7 252.7 695.8 255.3 695 252C694.2 248.7 693.7 232.7 695 230Z" fill="#bddba8" />
<path d="M695 325C698.7 298.0 705.8 320.8 712 318C718.2 315.2 725.7 311.7 732 308C738.3 304.3 745.2 298.8 750 296C754.8 293.2 756.5 290.3 761 291C765.5 291.7 770.8 295.8 777 300C783.2 304.2 792.8 308.5 798 316C803.2 323.5 806.7 333.8 808 345C809.3 356.2 804.8 371.2 806 383C807.2 394.8 811.5 402.2 815 416C818.5 429.8 825.7 450.8 827 466C828.3 481.2 825.5 494.7 823 507C820.5 519.3 815.8 531.2 812 540C808.2 548.8 805.3 557.3 800 560C794.7 562.7 786.7 558.0 780 556C773.3 554.0 767.5 547.3 760 548C752.5 548.7 741.7 551.3 735 560C728.3 568.7 725.0 588.0 720 600C715.0 612.0 709.2 626.0 705 632C700.8 638.0 697.5 661.3 695 636C692.5 610.7 690.0 531.8 690 480C690.0 428.2 691.3 352.0 695 325Z" fill="#d9e8bd" opacity=".75"/>
<path d="M695 325C698.7 298.0 705.8 320.8 712 318C718.2 315.2 725.7 311.7 732 308C738.3 304.3 745.2 298.8 750 296C754.8 293.2 756.5 290.3 761 291C765.5 291.7 770.8 295.8 777 300C783.2 304.2 792.8 308.5 798 316C803.2 323.5 806.7 333.8 808 345C809.3 356.2 804.8 371.2 806 383C807.2 394.8 811.5 402.2 815 416C818.5 429.8 825.7 450.8 827 466C828.3 481.2 825.5 494.7 823 507C820.5 519.3 815.8 531.2 812 540C808.2 548.8 805.3 557.3 800 560C794.7 562.7 786.7 558.0 780 556C773.3 554.0 767.5 547.3 760 548C752.5 548.7 741.7 551.3 735 560C728.3 568.7 725.0 588.0 720 600C715.0 612.0 709.2 626.0 705 632C700.8 638.0 697.5 661.3 695 636C692.5 610.7 690.0 531.8 690 480C690.0 428.2 691.3 352.0 695 325Z" fill="#cde3b6" filter="url(#mot)"/>
<path d="M740 330C744.2 325.3 754.7 327.0 760 322C765.3 317.0 768.3 300.7 772 300C775.7 299.3 778.0 313.0 782 318C786.0 323.0 793.0 323.0 796 330C799.0 337.0 801.0 350.0 800 360C799.0 370.0 794.2 383.3 790 390C785.8 396.7 780.0 400.8 775 400C770.0 399.2 765.0 390.0 760 385C755.0 380.0 749.2 375.8 745 370C740.8 364.2 735.8 356.7 735 350C734.2 343.3 735.8 334.7 740 330Z" fill="#bddba8" opacity=".8" filter="url(#mot2)"/>
<path d="M700 400C702.5 393.3 712.5 390.0 720 390C727.5 390.0 737.5 395.0 745 400C752.5 405.0 757.5 413.3 765 420C772.5 426.7 784.2 431.7 790 440C795.8 448.3 799.2 460.0 800 470C800.8 480.0 799.2 496.7 795 500C790.8 503.3 782.5 495.0 775 490C767.5 485.0 758.3 476.7 750 470C741.7 463.3 732.5 456.7 725 450C717.5 443.3 709.2 438.3 705 430C700.8 421.7 697.5 406.7 700 400Z" fill="#bddba8" opacity=".8" filter="url(#mot2)"/>
<path d="M760 515C762.8 511.3 770.0 509.8 775 510C780.0 510.2 785.3 512.7 790 516C794.7 519.3 801.3 524.0 803 530C804.7 536.0 802.8 547.3 800 552C797.2 556.7 791.0 558.7 786 558C781.0 557.3 774.7 552.3 770 548C765.3 543.7 759.7 537.5 758 532C756.3 526.5 757.2 518.7 760 515Z" fill="#bddba8" opacity=".8"/>
<path d="M699 528C702.0 522.8 709.8 522.0 715 524C720.2 526.0 726.2 532.3 730 540C733.8 547.7 737.3 558.3 738 570C738.7 581.7 736.7 600.0 734 610C731.3 620.0 726.3 628.3 722 630C717.7 631.7 711.7 626.7 708 620C704.3 613.3 701.8 600.8 700 590C698.2 579.2 697.2 565.3 697 555C696.8 544.7 696.0 533.2 699 528Z" fill="#bddba8" opacity=".7" filter="url(#mot2)"/>
<path d="M781 590C783.0 585.3 788.7 585.3 792 587C795.3 588.7 799.3 592.8 801 600C802.7 607.2 803.0 621.8 802 630C801.0 638.2 797.8 647.3 795 649C792.2 650.7 787.5 645.7 785 640C782.5 634.3 780.7 623.3 780 615C779.3 606.7 779.0 594.7 781 590Z" fill="#bddba8" />
<path d="M811 648C812.3 646.2 816.8 645.2 819 646C821.2 646.8 824.2 650.7 824 653C823.8 655.3 820.2 659.3 818 660C815.8 660.7 812.2 659.0 811 657C809.8 655.0 809.7 649.8 811 648Z" fill="#bddba8" />
<path d="M830 695C831.2 692.7 835.8 691.2 838 692C840.2 692.8 843.0 697.0 843 700C843.0 703.0 840.0 709.0 838 710C836.0 711.0 832.3 708.5 831 706C829.7 703.5 828.8 697.3 830 695Z" fill="#bddba8" />
<path d="M764 622C764.7 620.0 769.5 619.0 771 620C772.5 621.0 773.7 626.0 773 628C772.3 630.0 768.5 633.0 767 632C765.5 631.0 763.3 624.0 764 622Z" fill="#faf7e6" />
<path d="M695 706C699.7 692.5 709.5 712.5 716 719C722.5 725.5 728.8 734.8 734 745C739.2 755.2 743.3 768.3 747 780C750.7 791.7 750.8 804.7 756 815C761.2 825.3 775.3 832.8 778 842C780.7 851.2 773.5 862.0 772 870C770.5 878.0 782.7 885.8 769 890C755.3 894.2 703.5 910.0 690 895C676.5 880.0 687.2 831.5 688 800C688.8 768.5 690.3 719.5 695 706Z" fill="#d9e8bd" />
<path d="M695 730C696.8 719.3 703.5 731.0 708 736C712.5 741.0 717.3 749.3 722 760C726.7 770.7 732.2 786.7 736 800C739.8 813.3 742.7 825.0 745 840C747.3 855.0 755.0 881.7 750 890C745.0 898.3 722.5 896.7 715 890C707.5 883.3 708.0 865.0 705 850C702.0 835.0 698.7 820.0 697 800C695.3 780.0 693.2 740.7 695 730Z" fill="#cde3b6" filter="url(#mot)"/>
<path d="M695 31 L704 32 L711 33" fill="none" stroke="#86c9f8" stroke-width="1.2" stroke-linejoin="round" />
<path d="M711 33 L719 34 L721 38 L720 44" fill="none" stroke="#86c9f8" stroke-width="2.4" stroke-linejoin="round" />
<path d="M721 37 L726 31 L732 30 L737 28 L741 31 L748 30 L752 28" fill="none" stroke="#86c9f8" stroke-width="2.6" stroke-linejoin="round" />
<path d="M750 29 L756 25 L762 22 L767 17" fill="none" stroke="#86c9f8" stroke-width="4.5" stroke-linejoin="round" />
<path d="M766 17 L770 24 L772 30 L770 38" fill="none" stroke="#86c9f8" stroke-width="3" stroke-linejoin="round" />
<path d="M766 14 L800 11 L820 8 L846 12" fill="none" stroke="#86c9f8" stroke-width="1" stroke-linejoin="round" />
<path d="M846 12 L852 9 L856 14 L868 8 L877 9 L883 15 L883 23 L891 25" fill="none" stroke="#86c9f8" stroke-width="3" stroke-linejoin="round" />
<path d="M889 18 L891 25 L892 29 L889 34 L904 38 L916 36 L927 33" fill="none" stroke="#86c9f8" stroke-width="4" stroke-linejoin="round" />
<path d="M919 38 L932 50 L938 70" fill="none" stroke="#a9d3f2" stroke-width="1" stroke-linejoin="round" />
<path d="M938 70 L944 78 L944 95 L950 109 L952 118 L946 124 L954 132 L954 145 L948 155 L938 157 L925 161" fill="none" stroke="#86c9f8" stroke-width="3" stroke-linejoin="round" />
<path d="M1057 108 L1062 120 L1056 128" fill="none" stroke="#86c9f8" stroke-width="1.6" stroke-linejoin="round" />
<ellipse cx="712" cy="220" rx="1" ry="4" fill="#6fb8f3"/>
<ellipse cx="751" cy="258" rx="1.5" ry="5" fill="#6fb8f3"/>
<ellipse cx="753" cy="272" rx="2" ry="5" fill="#6fb8f3"/>
<ellipse cx="818" cy="517" rx="2" ry="3" fill="#6fb8f3"/>
<ellipse cx="792" cy="822" rx="4" ry="1" fill="#6fb8f3"/>
<path d="M1113 52 L1120 40 L1140 42 L1160 50 L1166 62 L1155 78 L1140 85 L1133 100 L1140 125 L1160 140 L1168 150 L1185 165" fill="none" stroke="#a9d3f2" stroke-width="1" stroke-linejoin="round" />
<path d="M838.5 0 L838.5 175" fill="none" stroke="#a8a698" stroke-width="1" stroke-linejoin="round" stroke-dasharray="2 2"/>
<path d="M838.5 108 L1065 108" fill="none" stroke="#a8a698" stroke-width="1" stroke-linejoin="round" stroke-dasharray="2 2"/>
<path d="M695 149 L838.5 149" fill="none" stroke="#a8a698" stroke-width="1" stroke-linejoin="round" stroke-dasharray="2 2"/>
<path d="M1052 0 L1057 30 L1060 66 L1064 95 L1066 108 L1058 123 L1068 135 L1070 170" fill="none" stroke="#a8a698" stroke-width="1" stroke-linejoin="round" stroke-dasharray="2 2"/>
<path d="M695 314 L845 314" fill="none" stroke="#a8a698" stroke-width="1" stroke-linejoin="round" stroke-dasharray="2 2"/>
<path d="M840 165 L840 314" fill="none" stroke="#a8a698" stroke-width="1" stroke-linejoin="round" stroke-dasharray="2 2"/>
<path d="M695 473 L845 473" fill="none" stroke="#a8a698" stroke-width="1" stroke-linejoin="round" stroke-dasharray="2 2"/>
<path d="M764 667 L845 667" fill="none" stroke="#a8a698" stroke-width="1" stroke-linejoin="round" stroke-dasharray="2 2"/>
<path d="M1198 76 L1198 100 L1180 112 L1186 135 L1190 165" fill="none" stroke="#a8a698" stroke-width="1" stroke-linejoin="round" stroke-dasharray="2 2"/>
<path d="M1205 72 L1248 47 L1268 47 L1284 16" fill="none" stroke="#a8a698" stroke-width="1" stroke-linejoin="round" stroke-dasharray="2 2"/>
<path d="M1255 80 L1270 92 L1300 105 L1330 115" fill="none" stroke="#a8a698" stroke-width="1" stroke-linejoin="round" stroke-dasharray="2 2"/>
<path d="M1300 102 L1325 108 L1336 130 L1338 150 L1345 175" fill="none" stroke="#a8a698" stroke-width="1" stroke-linejoin="round" stroke-dasharray="2 2"/>
<path d="M1740 149 L1744 170 L1752 200 L1756 240 L1748 300 L1742 330" fill="none" stroke="#a8a698" stroke-width="1" stroke-linejoin="round" stroke-dasharray="2 2"/>
<path d="M1813 148 L1804 180 L1798 215 L1795 245 L1790 300" fill="none" stroke="#a8a698" stroke-width="1" stroke-linejoin="round" stroke-dasharray="2 2"/>
<path d="M1845 140 L1847 180 L1850 215 L1852 232" fill="none" stroke="#a8a698" stroke-width="1" stroke-linejoin="round" stroke-dasharray="2 2"/>
<path d="M1776 244 L1840 246" fill="none" stroke="#a8a698" stroke-width="1" stroke-linejoin="round" stroke-dasharray="2 2"/>
<path d="M1770 273 L1822 275 L1822 300" fill="none" stroke="#a8a698" stroke-width="1" stroke-linejoin="round" stroke-dasharray="2 2"/>
<path d="M1687 275 L1718 276 L1728 300 L1742 312" fill="none" stroke="#a8a698" stroke-width="1" stroke-linejoin="round" stroke-dasharray="2 2"/>
<path d="M1706 345 L1712 380 L1707 410 L1720 420" fill="none" stroke="#a8a698" stroke-width="1" stroke-linejoin="round" stroke-dasharray="2 2"/>
<path d="M1192 0 L1196 6 L1204 4 L1210 12 L1240 12 L1244 5 L1262 10 L1268 14 L1286 16 L1316 1 L1318 0" fill="none" stroke="#77766f" stroke-width="1.4" stroke-linejoin="round" />
<path d="M1300 8 L1316 1 L1426 66 L1432 80 L1441 84 L1446 96 L1454 100 L1463 100 L1464 112 L1495 133 L1500 165" fill="none" stroke="#77766f" stroke-width="1.4" stroke-linejoin="round" />
<path d="M1687 182 L1703 168 L1731 148 L1832 148 L1836 138 L1853 132 L1861 118 L1868 104 L1871 80 L1880 70 L1890 60" fill="none" stroke="#77766f" stroke-width="1.4" stroke-linejoin="round" />
<path d="M695 682 L711 682 L711 666.5 L764 666.5 L778 680 L800 699 L817 719 L821 745 L843 754 L846 754" fill="none" stroke="#77766f" stroke-width="1.4" stroke-linejoin="round" />
<path d="M695 740 L702 760 L700 790 L712 810 L730 812 L740 830 L760 820 L790 818 L810 826 L830 812 L840 790 L846 770" fill="none" stroke="#a8a698" stroke-width="1" stroke-linejoin="round" stroke-dasharray="2 2"/>
<path d="M695 118 L740 94 L782 92 L816 55 L839 63 L938 67 L1010 65 L1061 66 L1095 66" fill="none" stroke="#f3cd8e" stroke-width="1.2" stroke-linejoin="round" />
<path d="M702 115 L730 118 L742 140 L748 160 L760 175 L768 200 L769 240 L790 250 L800 270 L812 309 L812 402 L818 440 L822 480 L815 520" fill="none" stroke="#f3cd8e" stroke-width="1.2" stroke-linejoin="round" />
<path d="M1061 66 L1075 85 L1090 108 L1110 118 L1135 128 L1168 150" fill="none" stroke="#f3cd8e" stroke-width="1.2" stroke-linejoin="round" />
<path d="M1056 0 L1058 30 L1061 66 L1060 100 L1054 130 L1062 165" fill="none" stroke="#f3cd8e" stroke-width="1.2" stroke-linejoin="round" />
<path d="M1203 74 L1190 80 L1181 95 L1177 120 L1170 150 L1172 165" fill="none" stroke="#f3cd8e" stroke-width="1.2" stroke-linejoin="round" />
<path d="M1168 150 L1200 152 L1225 165" fill="none" stroke="#f3cd8e" stroke-width="1.2" stroke-linejoin="round" />
<path d="M695 340 L740 335 L780 350 L810 366 L845 366" fill="none" stroke="#f3cd8e" stroke-width="1.2" stroke-linejoin="round" />
<path d="M695 560 L730 552 L765 540 L780 523 L775 560 L768 600 L762 640 L764 667" fill="none" stroke="#f3cd8e" stroke-width="1.2" stroke-linejoin="round" />
<path d="M695 655 L730 660 L764 667 L800 690 L845 700" fill="none" stroke="#f3cd8e" stroke-width="1.2" stroke-linejoin="round" />
<path d="M764 667 L770 720 L776 777 L790 830 L800 890" fill="none" stroke="#f3cd8e" stroke-width="1.2" stroke-linejoin="round" />
<path d="M1422 0 L1428 20 L1428 40 L1432 55 L1427 62 L1436 66 L1441 84 L1452 92 L1480 97 L1510 94 L1535 88 L1548 83 L1560 86 L1588 92 L1620 95" fill="none" stroke="#f7dc8a" stroke-width="1.6" stroke-linejoin="round" />
<path d="M1548 83 L1562 105 L1572 125 L1578 150 L1585 170" fill="none" stroke="#f7dc8a" stroke-width="1.4" stroke-linejoin="round" />
<path d="M1588 92 L1612 96 L1640 108 L1662 122 L1685 132 L1703 131" fill="none" stroke="#f7dc8a" stroke-width="1.4" stroke-linejoin="round" />
<path d="M1586 0 L1590 14 L1600 24 L1604 42 L1606 70 L1596 88" fill="none" stroke="#f7dc8a" stroke-width="1.4" stroke-linejoin="round" />
<path d="M1703 131 L1730 128 L1768 127 L1800 120 L1830 105" fill="none" stroke="#f3cd8e" stroke-width="1" stroke-linejoin="round" />
<path d="M1768 127 L1775 148 L1779 171 L1790 200 L1800 230 L1830 255 L1845 260" fill="none" stroke="#f3cd8e" stroke-width="1" stroke-linejoin="round" />
<path d="M1690 231 L1720 240 L1750 236 L1770 245 L1800 255 L1845 260" fill="none" stroke="#f3cd8e" stroke-width="1" stroke-linejoin="round" />
<path d="M1755 327 L1762 290 L1766 250 L1768 200" fill="none" stroke="#f3cd8e" stroke-width="1" stroke-linejoin="round" />
<path d="M1755 327 L1790 305 L1820 290 L1845 260" fill="none" stroke="#f3cd8e" stroke-width="1" stroke-linejoin="round" />
<path d="M1690 231 L1705 270 L1730 305 L1755 327" fill="none" stroke="#f3cd8e" stroke-width="1" stroke-linejoin="round" />
<path d="M1755 327 L1735 350 L1715 372 L1700 390 L1690 400" fill="none" stroke="#f3cd8e" stroke-width="1" stroke-linejoin="round" />
<path d="M1845 260 L1850 235 L1862 215 L1880 196" fill="none" stroke="#f3cd8e" stroke-width="1" stroke-linejoin="round" />
<path d="M1687 300 L1720 320 L1755 327" fill="none" stroke="#f3cd8e" stroke-width="1" stroke-linejoin="round" />
<filter id="halo" x="-5%" y="-5%" width="110%" height="110%"><feMorphology in="SourceAlpha" operator="dilate" radius="1.200" result="d"/><feGaussianBlur in="d" stdDeviation=".500" result="b"/><feFlood flood-color="#fff" flood-opacity=".9"/><feComposite in2="b" operator="in" result="h"/><feMerge><feMergeNode in="h"/><feMergeNode in="SourceGraphic"/></feMerge></filter>
<g font-family="'Liberation Sans',sans-serif" filter="url(#halo)">
<circle cx="922" cy="5" r="3.300" fill="#fff" stroke="#444" stroke-width="1.300"/>
<text x="909" y="62.9" font-size="13.65" textLength="58" lengthAdjust="spacingAndGlyphs" fill="#333" stroke="#333" stroke-width=".700">Bismarck</text>
<text x="1042" y="60.9" font-size="13.65" textLength="35" lengthAdjust="spacingAndGlyphs" fill="#333" stroke="#333" stroke-width=".700">Fargo</text>
<text x="1130" y="144.1" font-size="14.175" textLength="75" lengthAdjust="spacingAndGlyphs" fill="#333" stroke="#333" stroke-width=".700">Minneapolis</text>
<text x="695" y="109.1" font-size="14.175" textLength="30" lengthAdjust="spacingAndGlyphs" fill="#333" stroke="#333" stroke-width=".700">lings</text>
<text x="748" y="233.9" font-size="13.65" textLength="42" lengthAdjust="spacingAndGlyphs" fill="#333" stroke="#333" stroke-width=".700">Casper</text>
<text x="933" y="171.9" font-size="13.65" textLength="37" lengthAdjust="spacingAndGlyphs" fill="#333" stroke="#333" stroke-width=".700">Pierre</text>
<text x="785" y="303.9" font-size="13.65" textLength="63" lengthAdjust="spacingAndGlyphs" fill="#333" stroke="#333" stroke-width=".700">Cheyenne</text>
<text x="786" y="359.7" font-size="15.75" textLength="49" lengthAdjust="spacingAndGlyphs" fill="#333" stroke="#333" stroke-width=".700">Denver</text>
<text x="763" y="395.9" font-size="13.65" textLength="103" lengthAdjust="spacingAndGlyphs" fill="#333" stroke="#333" stroke-width=".700">Colorado Springs</text>
<text x="754" y="516.9" font-size="13.65" textLength="52" lengthAdjust="spacingAndGlyphs" fill="#333" stroke="#333" stroke-width=".700">Santa Fe</text>
<text x="742" y="661.9" font-size="13.65" textLength="44" lengthAdjust="spacingAndGlyphs" fill="#333" stroke="#333" stroke-width=".700">El Paso</text>
<text x="731" y="771.9" font-size="13.65" textLength="91" lengthAdjust="spacingAndGlyphs" fill="#333" stroke="#333" stroke-width=".700">Chihuahua City</text>
<text x="833" y="877.9" font-size="13.65" textLength="47" lengthAdjust="spacingAndGlyphs" fill="#333" stroke="#333" stroke-width=".700">Torreon</text>
<text x="1393" y="76.9" font-size="13.65" textLength="94" lengthAdjust="spacingAndGlyphs" fill="#333" stroke="#333" stroke-width=".700">Sault Ste. Marie</text>
<text x="1559" y="85.9" font-size="13.65" textLength="60" lengthAdjust="spacingAndGlyphs" fill="#333" stroke="#333" stroke-width=".700">North Bay</text>
<text x="1679" y="123.7" font-size="15.75" textLength="49" lengthAdjust="spacingAndGlyphs" fill="#333" stroke="#333" stroke-width=".700">Ottawa</text>
<text x="1741" y="121.1" font-size="14.175" textLength="55" lengthAdjust="spacingAndGlyphs" fill="#333" stroke="#333" stroke-width=".700">Montreal</text>
<text x="1748" y="165.9" font-size="13.65" textLength="63" lengthAdjust="spacingAndGlyphs" fill="#333" stroke="#333" stroke-width=".700">Burlington</text>
<text x="1859" y="172.9" font-size="13.65" textLength="47" lengthAdjust="spacingAndGlyphs" fill="#333" stroke="#333" stroke-width=".700">Augusta</text>
<text x="1659" y="225.9" font-size="13.65" textLength="59" lengthAdjust="spacingAndGlyphs" fill="#333" stroke="#333" stroke-width=".700">Syracuse</text>
<text x="1824" y="255.1" font-size="14.175" textLength="43" lengthAdjust="spacingAndGlyphs" fill="#333" stroke="#333" stroke-width=".700">Boston</text>
<text x="1722" y="320.9" font-size="16.275000000000002" textLength="67" lengthAdjust="spacingAndGlyphs" fill="#333" stroke="#333" stroke-width=".700">New York</text>
<text x="1622" y="392.7" font-size="15.75" textLength="82" lengthAdjust="spacingAndGlyphs" fill="#333" stroke="#333" stroke-width=".700">Washington</text>
<text x="1664" y="471.9" font-size="13.65" textLength="45" lengthAdjust="spacingAndGlyphs" fill="#333" stroke="#333" stroke-width=".700">Norfolk</text>
<text x="1129" y="106.0" font-size="11" textLength="71" lengthAdjust="spacing" fill="#8b8b84" stroke="#8b8b84" stroke-width=".250">MINNESOTA</text>
<text x="739" y="571.0" font-size="11" textLength="78" lengthAdjust="spacing" fill="#8b8b84" stroke="#8b8b84" stroke-width=".250">NEW MEXICO</text>
<text x="1817" y="206.0" font-size="11" textLength="23" lengthAdjust="spacing" fill="#8b8b84" stroke="#8b8b84" stroke-width=".250">NEW</text>
<text x="1794" y="219.0" font-size="11" textLength="68" lengthAdjust="spacing" fill="#8b8b84" stroke="#8b8b84" stroke-width=".250">HAMPSHIRE</text>
<text x="1751" y="293.0" font-size="11" textLength="86" lengthAdjust="spacing" fill="#8b8b84" stroke="#8b8b84" stroke-width=".250">CONNECTICUT</text>
<text x="1707" y="354.0" font-size="11" textLength="74" lengthAdjust="spacing" fill="#8b8b84" stroke="#8b8b84" stroke-width=".250">NEW JERSEY</text>
<text x="1908" y="139.0" font-size="11" textLength="102" lengthAdjust="spacing" fill="#8b8b84" stroke="#8b8b84" stroke-width=".250">NEW BRUNSWICK</text>
</g>
<circle cx="937.5" cy="69.5" r="3.300" fill="#fff" stroke="#444" stroke-width="1.300"/>
<circle cx="1061" cy="66.8" r="3.300" fill="#fff" stroke="#444" stroke-width="1.300"/>
<circle cx="1167.5" cy="150" r="3.300" fill="#fff" stroke="#444" stroke-width="1.300"/>
<circle cx="702" cy="114.5" r="3.300" fill="#fff" stroke="#444" stroke-width="1.300"/>
<circle cx="768.5" cy="240" r="3.300" fill="#fff" stroke="#444" stroke-width="1.300"/>
<circle cx="815" cy="309" r="3.300" fill="#fff" stroke="#444" stroke-width="1.300"/>
<circle cx="810" cy="366" r="3.300" fill="#fff" stroke="#444" stroke-width="1.300"/>
<circle cx="813" cy="402" r="3.300" fill="#fff" stroke="#444" stroke-width="1.300"/>
<circle cx="779.5" cy="523" r="3.300" fill="#fff" stroke="#444" stroke-width="1.300"/>
<circle cx="764.5" cy="667" r="3.300" fill="#fff" stroke="#444" stroke-width="1.300"/>
<circle cx="776" cy="777" r="3.300" fill="#fff" stroke="#444" stroke-width="1.300"/>
<circle cx="1439.5" cy="83" r="3.300" fill="#fff" stroke="#444" stroke-width="1.300"/>
<circle cx="1588.5" cy="92" r="3.300" fill="#fff" stroke="#444" stroke-width="1.300"/>
<circle cx="1703.5" cy="131" r="3.300" fill="#fff" stroke="#444" stroke-width="1.300"/>
<circle cx="1768.5" cy="127" r="3.300" fill="#fff" stroke="#444" stroke-width="1.300"/>
<circle cx="1779.5" cy="171" r="3.300" fill="#fff" stroke="#444" stroke-width="1.300"/>
<circle cx="1690" cy="231" r="3.300" fill="#fff" stroke="#444" stroke-width="1.300"/>
<circle cx="1845" cy="260" r="3.300" fill="#fff" stroke="#444" stroke-width="1.300"/>
<circle cx="1755" cy="327.5" r="3.300" fill="#fff" stroke="#444" stroke-width="1.300"/>
<circle cx="1687" cy="477" r="3.300" fill="#fff" stroke="#444" stroke-width="1.300"/>
</svg>
<div class="ctl" style="left:980px;top:28px;width:59px;height:53px;border-radius:9px"><svg width="59" height="53" viewBox="0 0 59 53"><defs><linearGradient id="aig" x1="0" y1="0" x2="0" y2="1"><stop offset="0" stop-color="#5a1a9a"/><stop offset="1" stop-color="#d63fd0"/></linearGradient></defs><rect x="16" y="13" width="27" height="27" rx="5" fill="url(#aig)"/><circle cx="37.700" cy="18" r="6.800" fill="#fff"/><path d="M37.700 12.600l1.500 3.900 3.900 1.500-3.900 1.500-1.500 3.900-1.500-3.900-3.900-1.500 3.900-1.500z" fill="#5c1a9c"/><text x="20.600" y="33.800" font-family="'Liberation Sans',sans-serif" font-weight="bold" font-size="19.600" fill="#fff" textLength="17.200" lengthAdjust="spacingAndGlyphs">Ai</text></svg></div>
<div class="abs" style="left:1045px;top:28px;width:123px;height:54px;border-radius:10px;background:#1a4a8f"><svg class="abs" style="left:14px;top:17px" width="24" height="19" viewBox="0 0 24 19"><rect x="1" y="4.500" width="21.500" height="13" rx="1.500" fill="none" stroke="#fff" stroke-width="1.300"/><path d="M8 4.500v-2.500a1 1 0 0 1 1-1h5.500a1 1 0 0 1 1 1v2.500M1 10.500h21.500M6.500 9v3M17 9v3" fill="none" stroke="#fff" stroke-width="1.300"/></svg><div class="abs" style="left:50px;top:18px;font-size:16.800px;line-height:20px;color:#fff;letter-spacing:0;-webkit-text-stroke:.25px #fff">Toolbox</div></div>
<div class="ctl" style="left:1176px;top:24px;width:38px;height:115px"><svg width="38" height="115" viewBox="0 0 38 115"><path d="M0 39.500h38M0 77.500h38" stroke="#ddd"/><path d="M11.500 19.500h15.500M19.200 11.700v15.500M11.500 58.500h15.500" stroke="#333" stroke-width="1.900"/><path d="M19 86l5.500 11.500h-11z" fill="#333a45"/><path d="M19 109l5.500-11.500h-11z" fill="#a9b0c4"/><circle cx="19" cy="97.500" r="2.100" fill="#fff"/></svg></div>
<div class="ctl" style="left:1176px;top:152px;width:38px;height:38px"><svg width="38" height="38" viewBox="0 0 38 38"><path d="M27 11l-15.500 6 7 2.500 2.500 7z" fill="none" stroke="#222" stroke-width="1.700" stroke-linejoin="round"/></svg></div>
<div class="abs" style="left:992px;top:872px;width:233px;height:18px;background:rgba(255,255,255,.5)"></div>
<div class="abs" style="left:992px;top:875px;width:228px;text-align:right;font-size:14px;line-height:15px;color:#333;white-space:nowrap;overflow:hidden;direction:rtl"><span style="direction:ltr;unicode-bidi:embed">MapTiler © OpenStreetMap contributors</span></div>
<div class="abs" style="left:1112px;top:845px;font-size:14px;line-height:18px;font-weight:bold;color:#1a4a8f;letter-spacing:-.3px">Attribution</div>
<svg class="abs" style="left:1184px;top:842px" width="25" height="25" viewBox="0 0 25 25"><circle cx="12.500" cy="12.500" r="11.500" fill="#000"/><text x="12.500" y="18.500" text-anchor="middle" font-family="'Liberation Serif',serif" font-style="italic" font-weight="bold" font-size="17" fill="#fff">i</text></svg>
</div>

<div id="dlg">
 <div id="dhead">
  <div id="dtitle">View Filtered Layer Data as:</div>
  <div class="rad on" style="left:17px"></div><div class="rlab" style="left:46px;color:#1a4a8f;font-weight:bold;letter-spacing:-.3px">POINT</div><div class="rcnt" style="left:99px">25</div>
  <div class="rad" style="left:128px"></div><div class="rlab" style="left:157px;letter-spacing:-.2px">LINE</div><div class="rcnt" style="left:198px">2</div>
  <div class="rad" style="left:217px"></div><div class="rlab" style="left:247px;letter-spacing:-.95px">POLYGON</div><div class="rcnt" style="left:323px">16188</div>
  <svg class="abs" style="left:750px;top:0px" width="92" height="32" viewBox="0 0 92 32"><path d="M5 11.500h17" stroke="#000" stroke-width="1.800"/><path d="M42.500 4.500h15v15h-15z" fill="none" stroke="#222" stroke-width="1.100"/><path d="M45 4.500v-2.500h15v15h-2.500" fill="none" stroke="#222" stroke-width="1.100"/><path d="M69 2.500l17.500 17.500M86.500 2.500l-17.500 17.500" stroke="#000" stroke-width="2.300"/></svg>
 </div>
 <div id="grid">
  <div id="ghead" style="width:842px">
   <div class="hc" style="left:19px">power</div><div class="fin" style="left:19px"></div><svg class="fic" style="left:140px" viewBox="0 0 18 14"><path d="M1 1.500h16M4 6.500h10M7 11.500h4" stroke="#181d1f" stroke-width="1.600"/></svg>
   <div class="hc" style="left:195px">name</div><div class="fin" style="left:195px"></div><svg class="fic" style="left:316px" viewBox="0 0 18 14"><path d="M1 1.500h16M4 6.500h10M7 11.500h4" stroke="#181d1f" stroke-width="1.600"/></svg>
   <div class="hc" style="left:370px">shape0</div><div class="fin" style="left:370px"></div><svg class="fic" style="left:491px" viewBox="0 0 18 14"><path d="M1 1.500h16M4 6.500h10M7 11.500h4" stroke="#181d1f" stroke-width="1.600"/></svg>
   <div class="hc" style="left:546px">shape1</div><div class="fin" style="left:546px"></div><svg class="fic" style="left:667px" viewBox="0 0 18 14"><path d="M1 1.500h16M4 6.500h10M7 11.500h4" stroke="#181d1f" stroke-width="1.600"/></svg>
   <div class="hsep" style="left:173px"></div>
   <div class="hsep" style="left:348px"></div>
   <div class="hsep" style="left:524px"></div>
   <div class="hsep" style="left:699px"></div>
   <div class="hc" style="left:721px;width:8px;overflow:hidden">shape2</div><div class="fin" style="left:721px;width:9px;border-right:0;border-radius:4px 0 0 4px"></div>
   <div class="hc" style="left:749px">Action</div>
   <div class="hsep" style="left:731px"></div>
  </div>
  <div class="hl" style="top:57px;width:817px"></div><div class="hl" style="top:113px;width:842px"></div>
  <div class="row" style="top:114px"><span style="left:19px">plant</span><span style="left:195px">Kerckhoff 2 Powe...</span><span style="left:370px;letter-spacing:-.17px">united_states_of_...</span><span style="left:546px">California</span><span style="left:721px;width:8px;overflow:hidden">F</span><svg viewBox="0 0 32 30"><ellipse cx="12.700" cy="11.600" rx="9.700" ry="7.700" fill="none" stroke="#000" stroke-width="1.700"/><path d="M8.500 11.600h8.400M12.700 7.400v8.400" stroke="#000" stroke-width="1.500"/><path d="M19.600 17.600l1.900-2.100 8.300 6.400a1.400 1.400 0 0 1-1.900 2.100z" fill="#fff" stroke="#000" stroke-width="1.400" stroke-linejoin="round"/></svg></div>
  <div class="row" style="top:163px"><span style="left:19px">plant</span><span style="left:195px">Labish Solar</span><span style="left:370px;letter-spacing:-.17px">united_states_of_...</span><span style="left:546px">Oregon</span><span style="left:721px;width:8px;overflow:hidden">M</span><svg viewBox="0 0 32 30"><ellipse cx="12.700" cy="11.600" rx="9.700" ry="7.700" fill="none" stroke="#000" stroke-width="1.700"/><path d="M8.500 11.600h8.400M12.700 7.400v8.400" stroke="#000" stroke-width="1.500"/><path d="M19.600 17.600l1.900-2.100 8.300 6.400a1.400 1.400 0 0 1-1.900 2.100z" fill="#fff" stroke="#000" stroke-width="1.400" stroke-linejoin="round"/></svg></div>
  <div class="row" style="top:212px"><span style="left:19px">plant</span><span style="left:195px">CoGen Power Pla...</span><span style="left:370px;letter-spacing:-.17px">united_states_of_...</span><span style="left:546px">California</span><span style="left:721px;width:8px;overflow:hidden">S</span><svg viewBox="0 0 32 30"><ellipse cx="12.700" cy="11.600" rx="9.700" ry="7.700" fill="none" stroke="#000" stroke-width="1.700"/><path d="M8.500 11.600h8.400M12.700 7.400v8.400" stroke="#000" stroke-width="1.500"/><path d="M19.600 17.600l1.900-2.100 8.300 6.400a1.400 1.400 0 0 1-1.900 2.100z" fill="#fff" stroke="#000" stroke-width="1.400" stroke-linejoin="round"/></svg></div>
  <div class="row" style="top:261px"><span style="left:19px">plant</span><span style="left:195px">Swan Falls</span><span style="left:370px;letter-spacing:-.17px">united_states_of_...</span><span style="left:546px">Idaho</span><span style="left:721px;width:8px;overflow:hidden">A</span><svg viewBox="0 0 32 30"><ellipse cx="12.700" cy="11.600" rx="9.700" ry="7.700" fill="none" stroke="#000" stroke-width="1.700"/><path d="M8.500 11.600h8.400M12.700 7.400v8.400" stroke="#000" stroke-width="1.500"/><path d="M19.600 17.600l1.900-2.100 8.300 6.400a1.400 1.400 0 0 1-1.900 2.100z" fill="#fff" stroke="#000" stroke-width="1.400" stroke-linejoin="round"/></svg></div>
  <div class="row" style="top:311px"><span style="left:19px">plant</span><span style="left:195px"></span><span style="left:370px;letter-spacing:-.17px">united_states_of_...</span><span style="left:546px">Utah</span><span style="left:721px;width:8px;overflow:hidden">W</span><svg viewBox="0 0 32 30"><ellipse cx="12.700" cy="11.600" rx="9.700" ry="7.700" fill="none" stroke="#000" stroke-width="1.700"/><path d="M8.500 11.600h8.400M12.700 7.400v8.400" stroke="#000" stroke-width="1.500"/><path d="M19.600 17.600l1.900-2.100 8.300 6.400a1.400 1.400 0 0 1-1.900 2.100z" fill="#fff" stroke="#000" stroke-width="1.400" stroke-linejoin="round"/></svg></div>
  <div class="row" style="top:360px"><span style="left:19px">plant</span><span style="left:195px">Mount Elbert Po...</span><span style="left:370px;letter-spacing:-.17px">united_states_of_...</span><span style="left:546px">Colorado</span><span style="left:721px;width:8px;overflow:hidden">L</span><svg viewBox="0 0 32 30"><ellipse cx="12.700" cy="11.600" rx="9.700" ry="7.700" fill="none" stroke="#000" stroke-width="1.700"/><path d="M8.500 11.600h8.400M12.700 7.400v8.400" stroke="#000" stroke-width="1.500"/><path d="M19.600 17.600l1.900-2.100 8.300 6.400a1.400 1.400 0 0 1-1.900 2.100z" fill="#fff" stroke="#000" stroke-width="1.400" stroke-linejoin="round"/></svg></div>
  <div class="row" style="top:409px"><span style="left:19px">plant</span><span style="left:195px">Morrow Point Da...</span><span style="left:370px;letter-spacing:-.17px">united_states_of_...</span><span style="left:546px">Colorado</span><span style="left:721px;width:8px;overflow:hidden">M</span><svg viewBox="0 0 32 30"><ellipse cx="12.700" cy="11.600" rx="9.700" ry="7.700" fill="none" stroke="#000" stroke-width="1.700"/><path d="M8.500 11.600h8.400M12.700 7.400v8.400" stroke="#000" stroke-width="1.500"/><path d="M19.600 17.600l1.900-2.100 8.300 6.400a1.400 1.400 0 0 1-1.900 2.100z" fill="#fff" stroke="#000" stroke-width="1.400" stroke-linejoin="round"/></svg></div>
  <div class="row" style="top:458px"><span style="left:19px">plant</span><span style="left:195px">Kearney Hydro</span><span style="left:370px;letter-spacing:-.17px">united_states_of_...</span><span style="left:546px">Nebraska</span><span style="left:721px;width:8px;overflow:hidden">B</span><svg viewBox="0 0 32 30"><ellipse cx="12.700" cy="11.600" rx="9.700" ry="7.700" fill="none" stroke="#000" stroke-width="1.700"/><path d="M8.500 11.600h8.400M12.700 7.400v8.400" stroke="#000" stroke-width="1.500"/><path d="M19.600 17.600l1.900-2.100 8.300 6.400a1.400 1.400 0 0 1-1.900 2.100z" fill="#fff" stroke="#000" stroke-width="1.400" stroke-linejoin="round"/></svg></div>
  <div class="row" style="top:507px;border:0"><svg viewBox="0 0 32 30"><ellipse cx="12.700" cy="11.600" rx="9.700" ry="7.700" fill="none" stroke="#000" stroke-width="1.700"/><path d="M8.500 11.600h8.400M12.700 7.400v8.400" stroke="#000" stroke-width="1.500"/><path d="M19.600 17.600l1.900-2.100 8.300 6.400a1.400 1.400 0 0 1-1.900 2.100z" fill="#fff" stroke="#000" stroke-width="1.400" stroke-linejoin="round"/></svg></div>
  <div id="pin"></div>
  <div class="abs" style="left:817px;top:114px;width:25px;height:411px;background:#f1f1f1"></div>
  <div class="abs" style="left:820px;top:138px;width:19px;height:120px;background:#c1c1c1"></div>
  <svg class="abs" style="left:817px;top:114px" width="25" height="411" viewBox="0 0 25 411"><path d="M6.500 14.500l6-6 6 6z" fill="#a3a3a3"/><path d="M6.500 394l6 6 6-6z" fill="#505050"/></svg>
  <div class="abs" style="left:0;top:525px;width:842px;height:25px;background:#f1f1f1"></div>
  <div class="abs" style="left:25px;top:527px;width:564px;height:20px;background:#c1c1c1"></div>
  <svg class="abs" style="left:0;top:525px" width="842" height="25" viewBox="0 0 842 25"><path d="M16 6l-6.500 6.500 6.500 6.500z" fill="#a3a3a3"/><path d="M713.500 6l6.500 6.500-6.500 6.500z" fill="#505050"/><path d="M745 6l-6.500 6.500 6.500 6.500z" fill="#a3a3a3"/><path d="M825.500 6l6.500 6.500-6.500 6.500z" fill="#a3a3a3"/><path d="M729.500 0v25" stroke="#dcdfe2"/></svg>
 </div>
 <div id="foot">
  <div class="abs" style="left:17px;top:34px;font-size:16px;line-height:20px;-webkit-text-stroke:.35px #fff;white-space:nowrap">Items per Page: 200</div>
  <div class="abs" style="left:531px;top:23px;width:120px;text-align:center;font-size:16.500px;line-height:20px;-webkit-text-stroke:.35px #fff">1 - 25 of 25<br>entries</div>
  <div class="abs" style="left:676px;top:33px;font-size:14px;line-height:18px;font-weight:bold;color:#7f9fd0;letter-spacing:.45px">PREV</div>
  <div class="abs" style="left:735px;top:33.500px;font-size:17px;line-height:20px;-webkit-text-stroke:.3px #fff">1</div>
  <div class="abs" style="left:765px;top:33px;font-size:14px;line-height:18px;font-weight:bold;color:#7f9fd0;letter-spacing:.45px">NEXT</div>
 </div>
</div>

</body>
</html>
